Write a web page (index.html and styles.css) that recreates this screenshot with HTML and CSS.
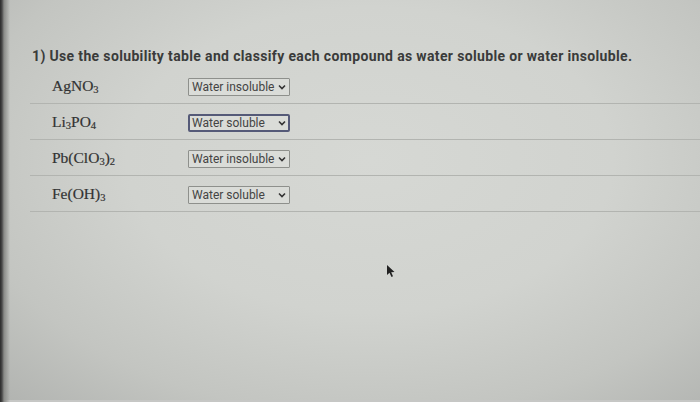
FILE: index.html
```html
<!DOCTYPE html>
<html>
<head>
<meta charset="utf-8">
<link rel="stylesheet" href="styles.css">
</head>
<body>
<div class="screen">
  <div class="content">
    <p class="title">1) Use the solubility table and classify each compound as water soluble or water insoluble.</p>
    <div class="rows">
      <div class="row">
        <div class="formula">AgNO<sub>3</sub></div>
        <div class="select"><span>Water insoluble</span><svg class="chev" viewBox="0 0 8 6" width="8" height="6"><path d="M1 1.5 L4 4.5 L7 1.5" fill="none" stroke="#333" stroke-width="1.6"/></svg></div>
      </div>
      <div class="row">
        <div class="formula">Li<sub>3</sub>PO<sub>4</sub></div>
        <div class="select focus"><span>Water soluble</span><svg class="chev" viewBox="0 0 8 6" width="8" height="6"><path d="M1 1.5 L4 4.5 L7 1.5" fill="none" stroke="#333" stroke-width="1.6"/></svg></div>
      </div>
      <div class="row">
        <div class="formula">Pb(ClO<sub>3</sub>)<sub>2</sub></div>
        <div class="select"><span>Water insoluble</span><svg class="chev" viewBox="0 0 8 6" width="8" height="6"><path d="M1 1.5 L4 4.5 L7 1.5" fill="none" stroke="#333" stroke-width="1.6"/></svg></div>
      </div>
      <div class="row">
        <div class="formula">Fe(OH)<sub>3</sub></div>
        <div class="select"><span>Water soluble</span><svg class="chev" viewBox="0 0 8 6" width="8" height="6"><path d="M1 1.5 L4 4.5 L7 1.5" fill="none" stroke="#333" stroke-width="1.6"/></svg></div>
      </div>
    </div>
  </div>
  <svg class="cursor" viewBox="0 0 10 14" width="10" height="14"><path d="M1 1 L1 11 L3.5 8.8 L5.5 13 L7 12.3 L5.2 8.2 L8.5 8 Z" fill="#222"/></svg>
</div>
</body>
</html>
```

FILE: styles.css
```css
html, body {
  margin: 0;
  padding: 0;
}
.screen {
  position: relative;
  width: 700px;
  height: 402px;
  overflow: hidden;
  background:
    linear-gradient(to right, #2a2a2a 0, #4a4a4a 2px, #8a8b88 4px, rgba(160,161,158,0) 10px),
    linear-gradient(to top, #c6c7c5 0, #c6c7c5 2px, rgba(0,0,0,0) 2px),
    radial-gradient(ellipse 540px 340px at 370px 160px, #d6d8d4 0%, #d1d3cf 45%, #c3c5c1 75%, #b0b2af 100%);
  font-family: Roboto, "Liberation Sans", Arial, sans-serif;
}
.content {
  padding: 47px 0 0 30px;
}
.title {
  margin: 0 0 0 2px;
  font-size: 14px;
  font-weight: bold;
  line-height: 19px;
  color: #3a3b3a;
  letter-spacing: 0.35px;
  white-space: nowrap;
}
.rows {
  margin-top: 2px;
}
.row {
  height: 35px;
  border-bottom: 1px solid #b2b4b0;
  display: flex;
  align-items: center;
}
.formula {
  width: 136px;
  padding-left: 22px;
  font-family: "Liberation Serif", "Times New Roman", serif;
  font-size: 15.5px;
  color: #333;
  -webkit-text-stroke: 0.2px #333;
}
.formula sub {
  font-size: 10.5px;
  vertical-align: -2px;
  line-height: 0;
}
.select {
  box-sizing: border-box;
  width: 102px;
  height: 18px;
  margin-top: 2px;
  border: 1px solid #8e908c;
  border-radius: 1px;
  background: #dadcd8;
  display: flex;
  align-items: center;
  justify-content: space-between;
  padding: 0 3px 0 3px;
  font-size: 12px;
  color: #444;
  line-height: 16px;
}
.select.focus {
  border: 2px solid #555a78;
  border-radius: 2px;
  padding: 0 2px 0 2px;
}
.chev {
  display: block;
  flex: none;
}
.cursor {
  position: absolute;
  left: 386px;
  top: 264px;
}
```
